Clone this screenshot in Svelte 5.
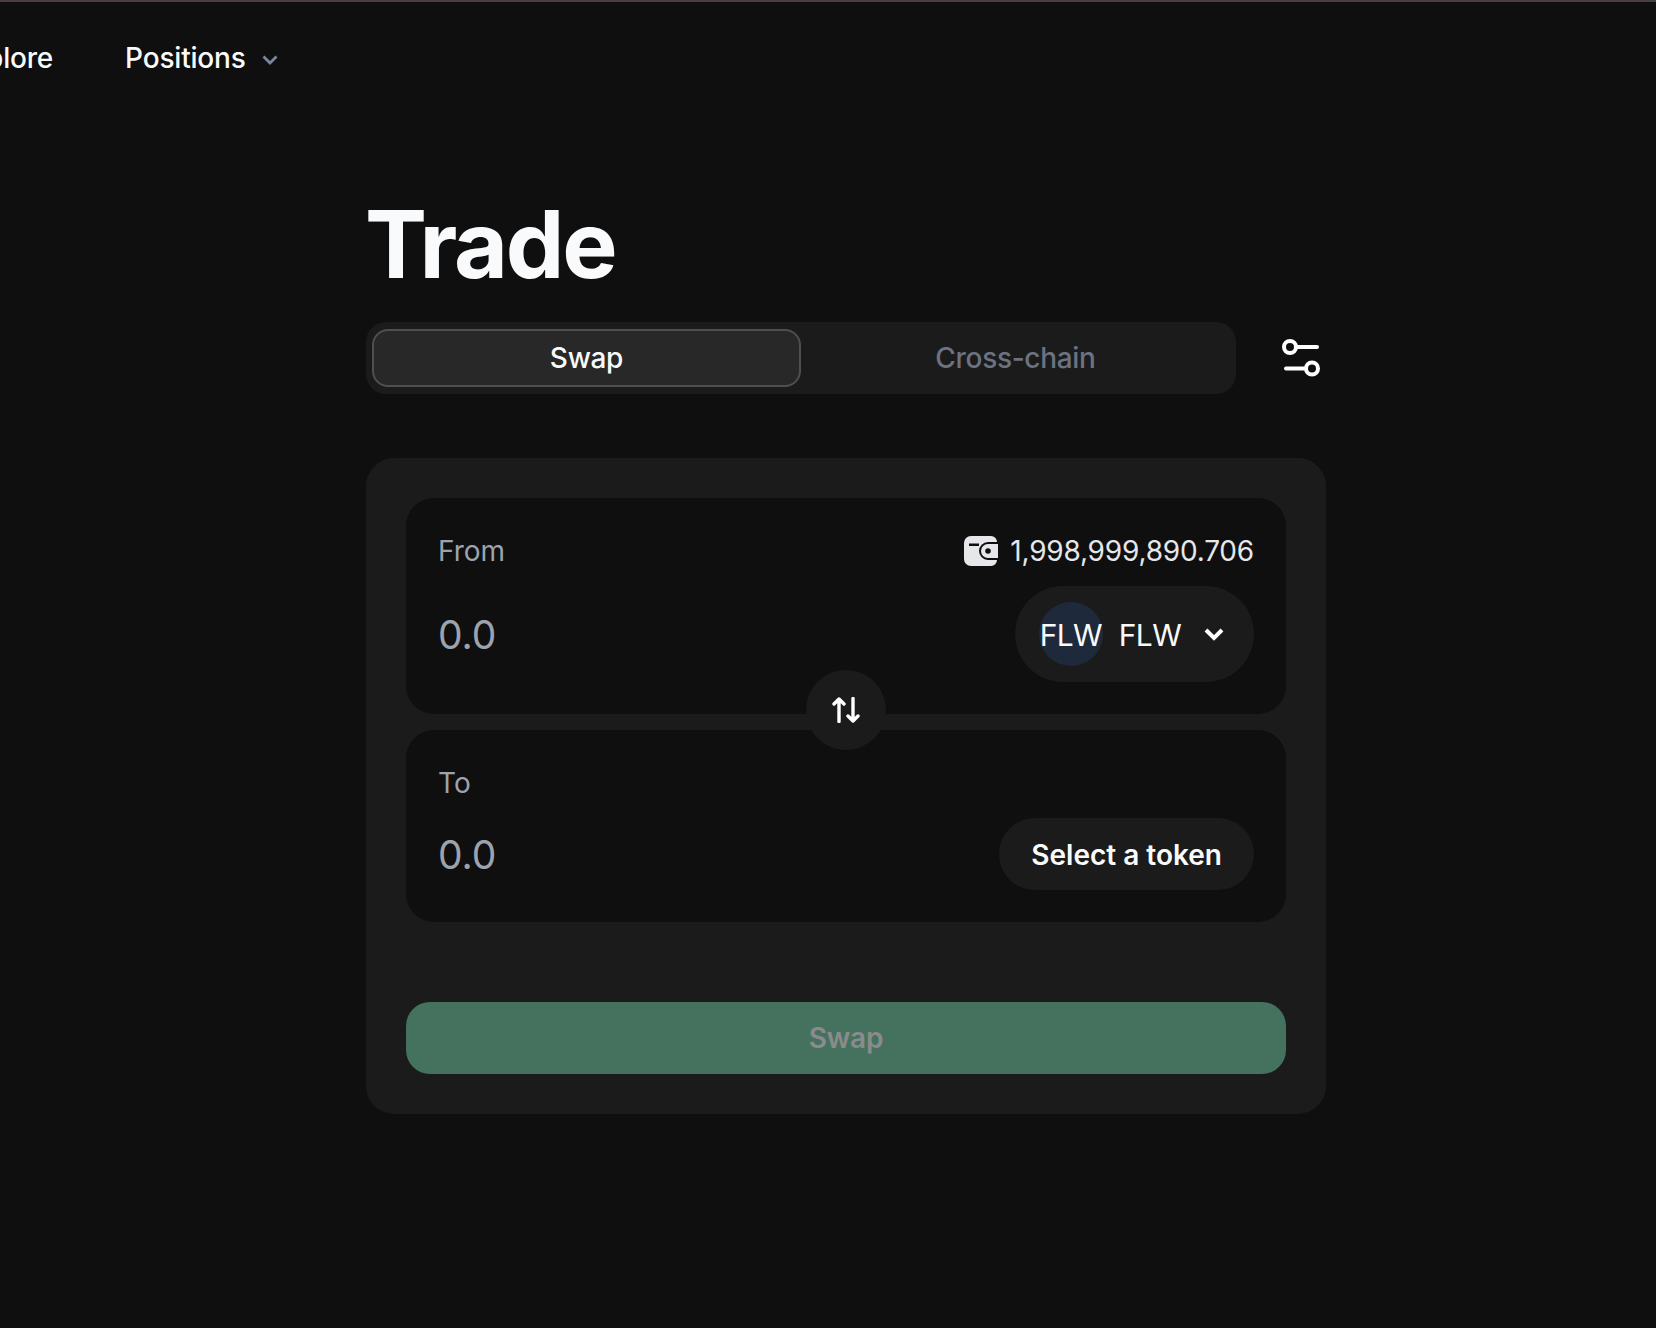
<script>
  let fromValue = $state('')
  let toValue = $state('')
</script>

<div class="page">
  <div class="topline"></div>

  <nav class="nav">
    <a class="nav-link" href="#explore">Explore</a>
    <a class="nav-link" href="#positions">
      Positions
      <svg class="nav-chevron" width="16" height="10" viewBox="0 0 16 10" fill="none">
        <path d="M1.5 1.5 8 8l6.5-6.5" stroke="#7b86a0" stroke-width="2.8" />
      </svg>
    </a>
  </nav>

  <main class="content">
    <h1>Trade</h1>

    <div class="tab-row">
      <div class="tabs">
        <button class="tab active">Swap</button>
        <button class="tab">Cross-chain</button>
      </div>
      <button class="settings" aria-label="Settings">
        <svg width="40" height="40" viewBox="0 0 40 40" fill="none" stroke="#fff" stroke-width="4" stroke-linecap="round">
          <circle cx="8" cy="9" r="6" />
          <path d="M14 9h21" />
          <circle cx="30" cy="30.500" r="6" />
          <path d="M4 30.500h20" />
        </svg>
      </button>
    </div>

    <section class="card">
      <div class="panels">
        <div class="panel from">
          <div class="panel-top">
            <span class="label">From</span>
            <span class="balance">
              <svg width="34" height="30" viewBox="0 0 34 30">
                <path fill="#e5e7eb" fill-rule="evenodd" d="M7 0h20a6 6 0 0 1 6 6H24a9 9 0 0 0 0 18h9a6 6 0 0 1-6 6H7a7 7 0 0 1-7-7V7a7 7 0 0 1 7-7ZM5 7.500v2.400h10V7.500Z" />
                <path fill="#e5e7eb" fill-rule="evenodd" d="M24 8h10v14H24a7 7 0 0 1 0-14Zm0 4.200a2.800 2.800 0 1 0 0 5.600 2.800 2.800 0 0 0 0-5.600Z" />
              </svg>
              1,998,999,890.706
            </span>
          </div>
          <div class="panel-bottom">
            <input class="amount" placeholder="0.0" bind:value={fromValue} />
            <button class="token-pill">
              <span class="token-logo">FLW</span>
              <span class="token-name">FLW</span>
              <svg class="pill-chevron" width="20" height="14" viewBox="0 0 20 14" fill="none">
                <path d="M2 3l8 8 8-8" stroke="#fff" stroke-width="4" />
              </svg>
            </button>
          </div>
        </div>

        <div class="panel to">
          <div class="panel-top">
            <span class="label">To</span>
          </div>
          <div class="panel-bottom">
            <input class="amount" placeholder="0.0" bind:value={toValue} />
            <button class="select-token">Select a token</button>
          </div>
        </div>

        <button class="flip" aria-label="Flip tokens">
          <svg width="28" height="26" viewBox="0 0 28 26" fill="none" stroke="#fff" stroke-width="3.400" stroke-linecap="round" stroke-linejoin="round">
            <path d="M7 24.500V2M2 7l5-5 5 5" />
            <path d="M21 1.500V24M16 19l5 5 5-5" />
          </svg>
        </button>
      </div>

      <button class="submit" disabled>Swap</button>
    </section>
  </main>
</div>

<style>
  :global(body) {
    margin: 0;
    background: #0f0f0f;
    font-family: Inter, "Liberation Sans", sans-serif;
  }

  button,
  input {
    font-family: inherit;
  }

  .page {
    height: 1328px;
    overflow: hidden;
    background: #0f0f0f;
    color: #fff;
  }

  .topline {
    height: 2px;
    background: #4a3f3f;
  }

  .nav {
    display: flex;
    align-items: center;
    gap: 72px;
    height: 112px;
    padding-bottom: 2px;
    margin-left: -46px;
  }

  .nav-link {
    display: flex;
    align-items: center;
    gap: 16px;
    color: #f9fafb;
    font-size: 28px;
    font-weight: 500;
    letter-spacing: -0.200px;
    text-decoration: none;
  }

  .nav-chevron {
    margin-top: 4px;
  }

  .content {
    width: 960px;
    margin-left: 366px;
  }

  h1 {
    margin: 0;
    padding-top: 72px;
    color: #f9fafb;
    font-size: 93px;
    font-weight: 700;
    line-height: 112px;
    letter-spacing: -2.200px;
    margin-left: -1px;
  }

  .tab-row {
    display: flex;
    align-items: center;
    justify-content: space-between;
    margin-top: 22px;
  }

  .tabs {
    display: grid;
    grid-template-columns: 1fr 1fr;
    gap: 0;
    width: 870px;
    height: 72px;
    padding: 7px 6px;
    box-sizing: border-box;
    background: #1b1b1b;
    border-radius: 20px;
  }

  .tab {
    border: 2px solid transparent;
    border-radius: 16px;
    background: none;
    color: #6b7280;
    font-size: 28px;
    font-weight: 500;
    letter-spacing: -0.300px;
  }

  .tab.active {
    border-color: #4f4f4f;
    background: #282828;
    color: #f9fafb;
  }

  .settings {
    display: flex;
    width: 40px;
    height: 40px;
    padding: 0;
    border: 0;
    margin-right: 4px;
    background: none;
  }

  .card {
    margin-top: 64px;
    padding: 40px;
    height: 656px;
    box-sizing: border-box;
    background: #1b1b1b;
    border-radius: 28px;
  }

  .panels {
    position: relative;
    display: flex;
    flex-direction: column;
    gap: 16px;
  }

  .panel {
    box-sizing: border-box;
    padding: 32px;
    background: #0f0f0f;
    border-radius: 28px;
  }

  .panel.from {
    height: 216px;
  }

  .panel.to {
    height: 192px;
  }

  .panel-top {
    display: flex;
    align-items: center;
    justify-content: space-between;
    height: 40px;
  }

  .label {
    padding-top: 2px;
    color: #9ca3af;
    font-size: 28px;
  }

  .balance {
    display: flex;
    align-items: center;
    gap: 12px;
    padding-top: 2px;
    color: #e5e7eb;
    font-size: 28px;
    letter-spacing: -0.200px;
  }

  .panel-bottom {
    display: flex;
    align-items: center;
    justify-content: space-between;
    margin-top: 16px;
  }

  .amount {
    width: 300px;
    padding: 0;
    border: 0;
    outline: 0;
    background: none;
    color: #9ca3af;
    font-size: 39px;
  }

  .amount::placeholder {
    color: #9ca3af;
    opacity: 1;
  }

  .token-pill {
    display: flex;
    align-items: center;
    height: 96px;
    padding: 0 30px 0 24px;
    border: 0;
    background: #1b1b1b;
    border-radius: 48px;
    color: #f9fafb;
    font-size: 30px;
    letter-spacing: -0.700px;
  }

  .token-logo {
    display: flex;
    align-items: center;
    justify-content: center;
    box-sizing: border-box;
    width: 64px;
    height: 64px;
    padding-top: 2px;
    margin-right: 16px;
    background: #1e293b;
    border-radius: 50%;
  }

  .token-name {
    padding-top: 2px;
  }

  .pill-chevron {
    margin-left: 23px;
  }

  .select-token {
    height: 72px;
    padding: 2px 32px 0;
    border: 0;
    background: #1b1b1b;
    border-radius: 36px;
    color: #f9fafb;
    font-size: 28px;
    font-weight: 600;
  }

  .flip {
    position: absolute;
    top: 172px;
    left: 400px;
    display: flex;
    align-items: center;
    justify-content: center;
    width: 80px;
    height: 80px;
    padding: 0;
    border: 0;
    background: #1b1b1b;
    border-radius: 50%;
  }

  .submit {
    display: block;
    width: 100%;
    height: 72px;
    margin-top: 80px;
    border: 0;
    background: #44725f;
    border-radius: 24px;
    color: #8b8b8b;
    font-size: 28px;
    font-weight: 600;
    letter-spacing: -0.200px;
  }
</style>
